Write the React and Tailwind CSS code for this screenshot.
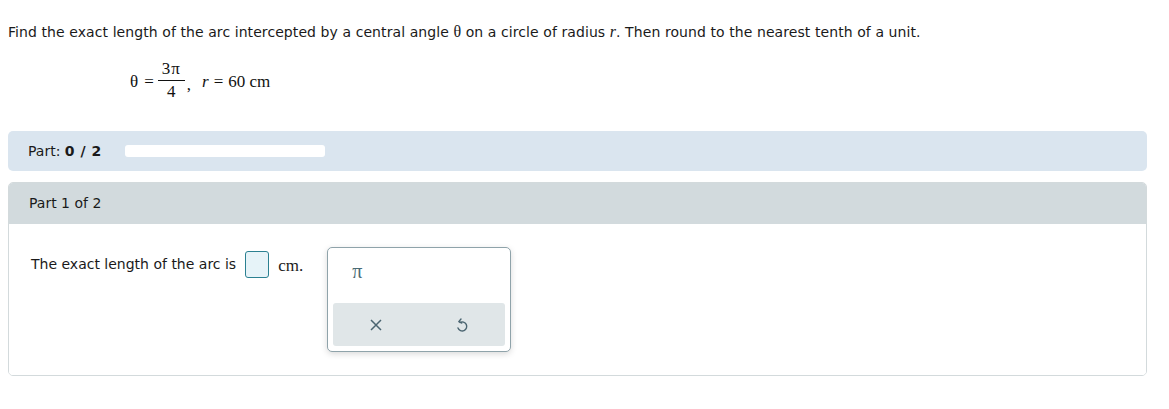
export default function App() {
  return (
    <div className="bg-white w-[1169px] h-[409px] text-[14px] text-[#1a1a1a]" style={{ fontFamily: '"DejaVu Sans", Verdana, sans-serif' }}>
      <div className="px-2 pt-[22px] w-[1155px]">
        <p className="leading-[20px] tracking-[0.08px]">
          Find the exact length of the arc intercepted by a central angle{' '}
          <span className="font-['Liberation_Serif'] text-[16px]">θ</span> on a circle of radius{' '}
          <span className="font-['Liberation_Serif'] italic text-[16px]">r</span>. Then round to the nearest tenth of a unit.
        </p>

        {/* formula */}
        <div className="flex items-center mt-[18px] ml-[122px] h-[40px] font-['Liberation_Serif'] text-[17px] text-[#111]">
          <span className="mt-[4px]">θ</span>
          <span className="mx-[6px] mt-[4px]">=</span>
          <span className="inline-flex flex-col items-center leading-[18px] ml-[-2px]">
            <span className="px-[4px] tracking-[1px]">3π</span>
            <span className="w-full border-t border-[#111] my-[2px]"></span>
            <span>4</span>
          </span>
          <span className="ml-[2px] mt-[10px]">,</span>
          <span className="ml-[11px] italic mt-[4px]">r</span>
          <span className="mx-[5px] mt-[4px]">=</span>
          <span className="mt-[4px]">60 cm</span>
        </div>

        {/* progress */}
        <div className="mt-[31px] h-[40px] rounded-[5px] bg-[#dae5ef] flex items-center pl-[20px]">
          <span>Part: <b className="font-bold tracking-[0.5px]">0 / 2</b></span>
          <div className="ml-[23px] w-[200px] h-[12px] bg-white rounded-[3px]"></div>
        </div>

        {/* part card */}
        <div className="mt-[11px] rounded-[5px] border border-[#d3dadc] overflow-hidden">
          <div className="h-[41px] bg-[#d2dadd] flex items-center pl-[20px]">Part 1 of 2</div>
          <div className="h-[151px] bg-white flex items-start pl-[22px] pt-[24px]">
            <div className="flex items-center mt-[2px]">
              <span>The exact length of the arc is</span>
              <span className="ml-[9px] w-[24px] h-[27px] rounded-[3px] border border-[#2b8091] bg-[#e6f3f8]"></span>
              <span className="ml-[9px] font-['Liberation_Serif'] text-[17px] mt-[3px]">cm.</span>
            </div>
            <div className="ml-[24px] -mt-[1px] w-[184px] h-[105px] rounded-[5px] border border-[#8fa3aa] bg-white shadow-[0_2px_6px_rgba(0,0,0,0.15)] flex flex-col p-[5px]">
              <div className="h-[50px] pl-[19px] pt-[3px] font-['Liberation_Serif'] text-[20px] text-[#4a6b75]">π</div>
              <div className="flex-1 rounded-[3px] bg-[#e0e6e8] flex items-center">
                <div className="flex-1 flex justify-center">
                  <svg width="14" height="14" viewBox="0 0 14 14" stroke="#4a6470" strokeWidth="1.5" fill="none">
                    <path d="M2 2 L12 12 M12 2 L2 12" />
                  </svg>
                </div>
                <div className="flex-1 flex justify-center">
                  <svg width="14" height="16" viewBox="0 0 14 16" stroke="#4a6470" strokeWidth="1.4" fill="none" strokeLinecap="round" strokeLinejoin="round">
                    <path d="M5 5.5 A4.5 4.5 0 1 1 3 11" />
                    <path d="M6 2 L3.8 4.6 L6.8 6" />
                  </svg>
                </div>
              </div>
            </div>
          </div>
        </div>
      </div>
    </div>
  )
}
